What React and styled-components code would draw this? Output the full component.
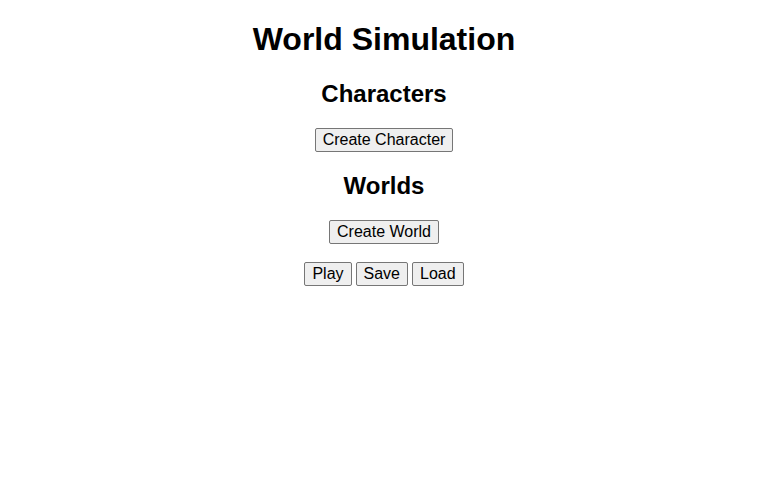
import styled, { createGlobalStyle } from "styled-components";

const GlobalStyle = createGlobalStyle`
  body {
    margin: 0;
    background: #ffffff;
    font-family: "Liberation Sans", Arial, sans-serif;
    color: #000000;
  }
`;

const Page = styled.div`
  padding: 0 8px;
  text-align: center;
`;

const Title = styled.h1`
  font-size: 32px;
  font-weight: bold;
  margin: 21.44px 0;
`;

const SectionTitle = styled.h2`
  font-size: 24px;
  font-weight: bold;
  margin: 19.92px 0;
`;

const Section = styled.section``;

const Controls = styled.div`
  margin-top: ${(p) => p.$offset || 0}px;
  display: flex;
  justify-content: center;
  gap: 4px;
`;

const Button = styled.button`
  font-family: "Liberation Sans", Arial, sans-serif;
  font-size: 16px;
  height: 24px;
  padding: 1px 7px;
  color: #000000;
  background: #efefef;
  border: 1px solid #767676;
  border-radius: 2px;
  cursor: pointer;
`;

export default function App() {
  return (
    <>
      <GlobalStyle />
      <Page>
        <Title>World Simulation</Title>
        <Section>
          <SectionTitle>Characters</SectionTitle>
          <Controls>
            <Button>Create Character</Button>
          </Controls>
        </Section>
        <Section>
          <SectionTitle>Worlds</SectionTitle>
          <Controls>
            <Button>Create World</Button>
          </Controls>
        </Section>
        <Controls $offset={18}>
          <Button>Play</Button>
          <Button>Save</Button>
          <Button>Load</Button>
        </Controls>
      </Page>
    </>
  );
}
